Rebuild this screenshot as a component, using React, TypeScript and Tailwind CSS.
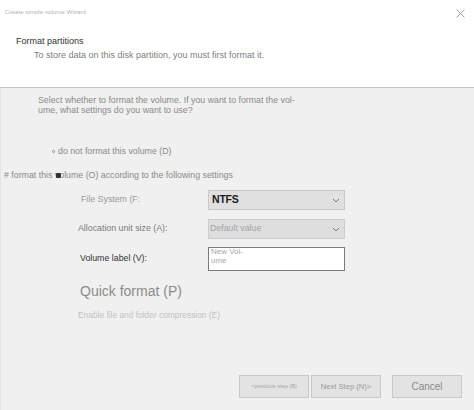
import React from "react";

function Chevron() {
  return (
    <svg width="8" height="5" viewBox="0 0 8 5" className="shrink-0">
      <path d="M1 1 L4 4 L7 1" fill="none" stroke="#777" strokeWidth="1" />
    </svg>
  );
}

export default function App() {
  return (
    <div
      className="w-[474px] h-[410px] flex flex-col overflow-hidden bg-[#f0f0f0]"
      style={{ fontFamily: '"Liberation Sans", Arial, sans-serif' }}
    >
      {/* Header */}
      <div className="h-[88px] shrink-0 bg-white border-b border-[#c4c4c4] flex flex-col">
        <div className="flex items-start justify-between pl-[5px] pr-[9px] pt-[8px]">
          <span className="text-[6.2px] leading-[8px] text-[#b4b4b4]">Create simple volume Wizard</span>
          <svg width="9" height="9" viewBox="0 0 9 9" className="mt-[1px]">
            <path d="M0.5 0.5 L8.5 8.5 M8.5 0.5 L0.5 8.5" stroke="#9a9a9a" strokeWidth="0.9" />
          </svg>
        </div>
        <div className="pl-[16px] pt-[18px] text-[9px] leading-[11px] text-[#333]">Format partitions</div>
        <div className="pl-[34px] pt-[3px] text-[9px] leading-[11px] text-[#808080]">
          To store data on this disk partition, you must first format it.
        </div>
      </div>

      {/* Body */}
      <div className="flex-1 flex flex-col border-l border-[#e4e4e4]">
        <div className="pl-[37px] pt-[8px] text-[8.8px] leading-[9.5px] text-[#8a8a8a]">
          <div>Select whether to format the volume. If you want to format the vol-</div>
          <div>ume, what settings do you want to use?</div>
        </div>

        <div className="pl-[51px] pt-[31px] flex items-center gap-[3px] text-[8.8px] leading-[10px] text-[#8a8a8a]">
          <span className="w-[3px] h-[3px] rounded-full border border-[#8a8a8a]" />
          <span>do not format this volume (D)</span>
        </div>

        <div className="pl-[3px] pt-[14px] text-[8.8px] leading-[10px] text-[#8a8a8a] flex items-center">
          <span>#&nbsp;format this&nbsp;</span>
          <span className="relative">
            volume
            <span className="absolute left-[1px] top-[3px] w-[5px] h-[5px] bg-[#333] rounded-[1px]" />
          </span>
          <span>&nbsp;(O) according to the following settings</span>
        </div>

        {/* Form */}
        <div className="pt-[10px] pl-[77px] flex flex-col">
          <div className="flex items-center h-[20px]">
            <span className="w-[130px] pl-[3px] text-[8.8px] text-[#9a9a9a]">File System (F:</span>
            <div className="w-[137px] h-[20px] bg-[#e0e0e0] border border-[#c9c9c9] flex items-center justify-between pl-[3px] pr-[4px]">
              <span className="text-[10.5px] font-bold text-[#1a1a1a] tracking-[-0.2px]">NTFS</span>
              <Chevron />
            </div>
          </div>
          <div className="flex items-center h-[20px] mt-[9px]">
            <span className="w-[130px] text-[8.8px] text-[#7a7a7a]">Allocation unit size (A):</span>
            <div className="w-[137px] h-[20px] bg-[#dedede] border border-[#cdcdcd] flex items-center justify-between pl-[1px] pr-[4px]">
              <span className="text-[8.8px] text-[#a4a4a4]">Default value</span>
              <Chevron />
            </div>
          </div>
          <div className="flex items-center h-[24px] mt-[8px]">
            <span className="w-[130px] pl-[2px] text-[8.8px] text-[#333]">Volume label (V):</span>
            <div className="w-[137px] h-[24px] bg-white border border-[#7a7a7a] flex flex-col pl-[2px] pt-[0px] text-[8px] leading-[8.5px] text-[#a8a8a8]">
              <span>New Vol-</span>
              <span>ume</span>
            </div>
          </div>

          <div className="pl-[2px] pt-[12px] text-[14px] leading-[16px] text-[#8c8c8c]">Quick format (P)</div>
          <div className="pt-[11px] text-[8.4px] leading-[10px] text-[#c2c2c2]">
            Enable file and folder compression (E)
          </div>
        </div>

        <div className="flex-1" />

        {/* Buttons */}
        <div className="flex justify-end pr-[12px] pb-[12px]">
          <div className="w-[70px] h-[23px] bg-[#e3e3e3] border border-[#c8c8c8] flex items-center justify-center text-[5.6px] text-[#a6a6a6]">
            &lt;previous step (B)
          </div>
          <div className="ml-[2px] w-[70px] h-[23px] bg-[#e3e3e3] border border-[#c8c8c8] flex items-center justify-center text-[7.6px] text-[#9a9a9a]">
            Next Step (N)&gt;
          </div>
          <div className="ml-[11px] w-[70px] h-[23px] bg-[#e3e3e3] border border-[#c8c8c8] flex items-center justify-center text-[10px] text-[#8a8a8a]">
            Cancel
          </div>
        </div>
      </div>
    </div>
  );
}
